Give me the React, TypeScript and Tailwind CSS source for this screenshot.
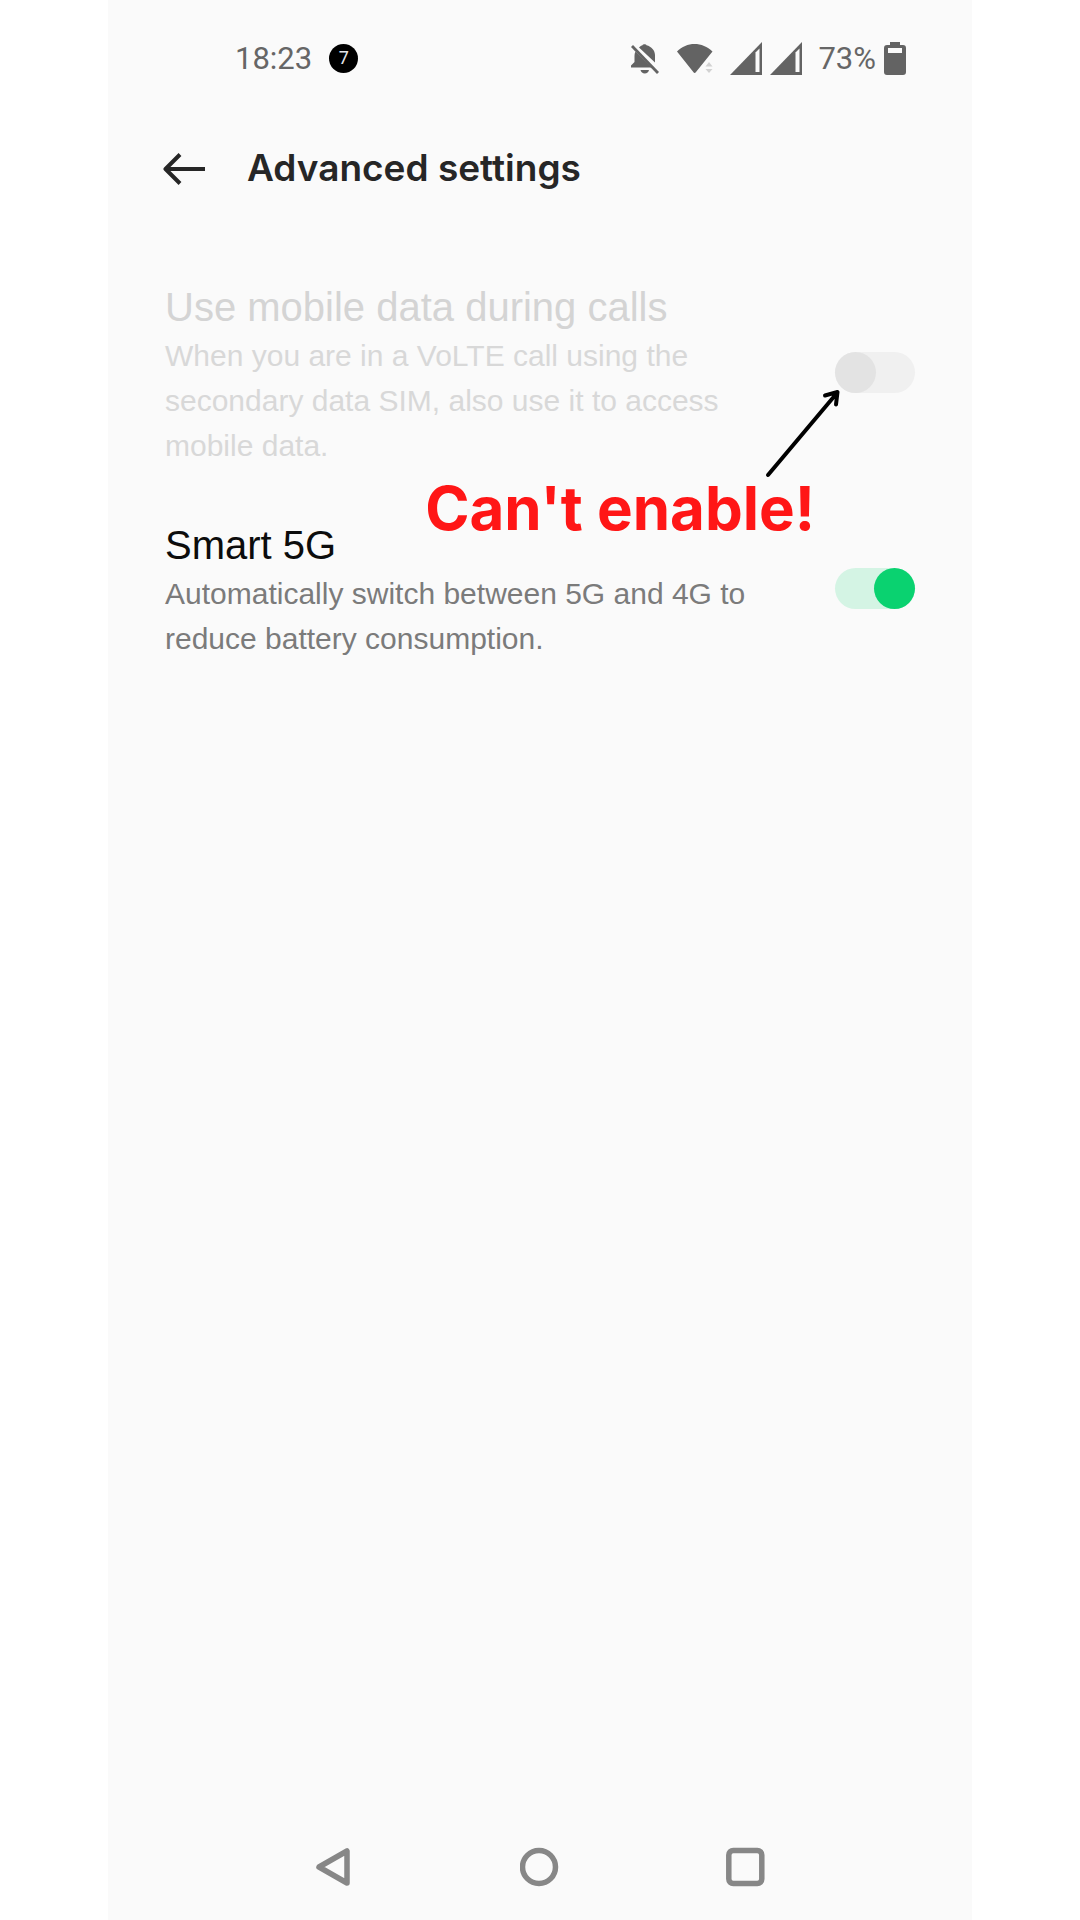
import { useState } from "react";

interface SettingRowProps {
  id: string;
  title: string;
  description: string;
  checked: boolean;
  disabled?: boolean;
  onChange?: (value: boolean) => void;
}

function BellOffIcon() {
  return (
    <svg width="30" height="32" viewBox="0 0 30 32" fill="#636363" aria-hidden="true">
      <path d="M9 5.500C10 4.300 11.500 3.500 12.500 3.200C13 2 16 2 16.500 3.200C21.500 4.500 25 8.500 25 13V20.500Z" />
      <path d="M5.500 9.500C4.700 11 4.500 12.500 4.500 14V20L1 23.500V25.500H21.500Z" />
      <path d="M10.500 28H19C18.500 30.300 17 31.500 14.800 31.500S11 30.300 10.500 28Z" />
      <path d="M2 4L28 31" fill="none" stroke="#636363" strokeWidth="2.800" />
    </svg>
  );
}

function WifiIcon() {
  return (
    <svg width="38" height="32" viewBox="0 0 38 32" fill="#636363" aria-hidden="true">
      <path d="M1 9.500C6 4.500 12 2 18.500 2S31.500 4.500 36.500 9.500L20 30Q18.700 31.800 17.300 30Z" />
      <path d="M29.500 24.500L33 20L36.500 24.500ZM29.500 27L33 31L36.500 27Z" fill="#d2d2d2" />
    </svg>
  );
}

function SignalIcon() {
  return (
    <svg width="32" height="33" viewBox="0 0 32 33" aria-hidden="true">
      <path d="M0 33L32 0V33Z" fill="#636363" />
      <path d="M25.500 10.500L29.500 6.500V30H25.500Z" fill="#fafafa" />
    </svg>
  );
}

function BatteryIcon() {
  return (
    <svg width="22" height="33" viewBox="0 0 22 33" aria-hidden="true">
      <path d="M6 0H16V3H19Q22 3 22 6V30Q22 33 19 33H3Q0 33 0 30V6Q0 3 3 3H6Z" fill="#636363" />
      <path d="M4 6H18V11H4Z" fill="#fafafa" />
    </svg>
  );
}

function StatusBar() {
  return (
    <div className="flex h-[116px] items-center justify-between pl-[127px] pr-[66px] font-['Roboto',sans-serif] text-[31px] text-[#666666]">
      <div className="flex items-center gap-[17px]">
        <span className="pt-0.5">18:23</span>
        <span className="flex size-[29px] items-center justify-center rounded-full bg-black text-lg text-gray-200">
          7
        </span>
      </div>
      <div className="flex items-center">
        <BellOffIcon />
        <span className="ml-4">
          <WifiIcon />
        </span>
        <span className="ml-4 flex gap-2">
          <SignalIcon />
          <SignalIcon />
        </span>
        <span className="ml-4 mr-2 pt-0.5">73%</span>
        <BatteryIcon />
      </div>
    </div>
  );
}

function SettingRow({ id, title, description, checked, disabled, onChange }: SettingRowProps) {
  return (
    <div className="flex items-center justify-between">
      <div className="w-[600px]">
        <label
          htmlFor={id}
          className={`block text-[40px] leading-[52px] ${disabled ? "text-[#d4d4d4]" : "text-[#0c0c0c]"}`}
        >
          {title}
        </label>
        <p
          id={`${id}-description`}
          className={`text-[30px] leading-[45px] ${disabled ? "text-[#d8d8d8]" : "text-[#7b7b7b]"}`}
        >
          {description}
        </p>
      </div>
      <input
        id={id}
        type="checkbox"
        role="switch"
        aria-describedby={`${id}-description`}
        checked={checked}
        disabled={disabled}
        onChange={(e) => onChange?.(e.target.checked)}
        className="mb-1 flex h-[41px] w-20 shrink-0 appearance-none rounded-full bg-[#f0f0f0] before:size-[41px] before:rounded-full before:bg-[#e3e3e3] checked:justify-end checked:bg-[#d4f4e4] checked:before:bg-[#0ad270]"
      />
    </div>
  );
}

function NavBar() {
  return (
    <nav className="flex justify-center gap-[166px] pb-[33px]">
      <button type="button" aria-label="Back">
        <svg width="40" height="40" viewBox="0 0 40 40" fill="none" stroke="#878787" strokeWidth="5.500" strokeLinejoin="round">
          <path d="M5 20L33 4V36Z" />
        </svg>
      </button>
      <button type="button" aria-label="Home">
        <svg width="40" height="40" viewBox="0 0 40 40" fill="none" stroke="#878787" strokeWidth="5.500">
          <circle cx="19" cy="20" r="16.500" />
        </svg>
      </button>
      <button type="button" aria-label="Recent apps">
        <svg width="40" height="40" viewBox="0 0 40 40" fill="none" stroke="#878787" strokeWidth="5.500">
          <rect x="2.800" y="3.500" width="33" height="33" rx="4.500" />
        </svg>
      </button>
    </nav>
  );
}

export default function App() {
  const [smart5g, setSmart5g] = useState(true);

  return (
    <div className="min-h-screen bg-white font-['Liberation_Sans',Arial,sans-serif]">
      <div className="mx-auto flex min-h-screen w-4/5 flex-col bg-[#fafafa]">
        <StatusBar />

        <header className="flex h-[106px] items-center gap-[42px] pl-[55px]">
          <button type="button" aria-label="Go back">
            <svg width="42" height="32" viewBox="0 0 42 32" fill="none" stroke="#262626" strokeWidth="4">
              <path d="M17 1.500L2.500 16L17 30.500M2.500 16H42" strokeLinejoin="round" />
            </svg>
          </button>
          <h1 className="pb-0.5 font-['Inter',sans-serif] text-[37px] font-semibold text-[#262626]">
            Advanced settings
          </h1>
        </header>

        <main className="flex flex-1 flex-col gap-[51px] pl-[57px] pr-[57px] pt-[59px]">
          <div className="relative">
            <SettingRow
              id="data-during-calls"
              title="Use mobile data during calls"
              description="When you are in a VoLTE call using the secondary data SIM, also use it to access mobile data."
              checked={false}
              disabled
            />
            {/* Callout pointing at the locked switch */}
            <svg
              className="absolute right-[72px] top-[106px]"
              width="80"
              height="92"
              viewBox="0 0 80 92"
              fill="none"
              stroke="#000"
              strokeWidth="4"
              strokeLinecap="round"
              aria-hidden="true"
            >
              <path d="M5 88L74 6M62 8.500L74.500 5L73 17.500" strokeLinejoin="round" />
            </svg>
            <p className="absolute right-[100px] top-[187px] whitespace-nowrap font-['Inter',sans-serif] text-[60px] font-bold leading-[80px] text-[#ff1616]">
              Can't enable!
            </p>
          </div>
          <SettingRow
            id="smart-5g"
            title="Smart 5G"
            description="Automatically switch between 5G and 4G to reduce battery consumption."
            checked={smart5g}
            onChange={setSmart5g}
          />
        </main>

        <NavBar />
      </div>
    </div>
  );
}
